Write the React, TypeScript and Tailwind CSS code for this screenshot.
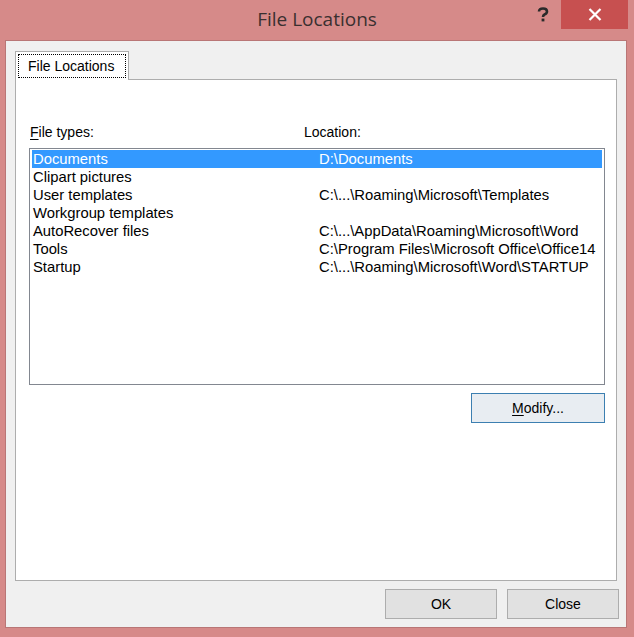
import React, { useState } from 'react';

type FileLocation = {
  type: string;
  location: string;
};

const locations: FileLocation[] = [
  { type: 'Documents', location: 'D:\\Documents' },
  { type: 'Clipart pictures', location: '' },
  { type: 'User templates', location: 'C:\\...\\Roaming\\Microsoft\\Templates' },
  { type: 'Workgroup templates', location: '' },
  { type: 'AutoRecover files', location: 'C:\\...\\AppData\\Roaming\\Microsoft\\Word' },
  { type: 'Tools', location: 'C:\\Program Files\\Microsoft Office\\Office14' },
  { type: 'Startup', location: 'C:\\...\\Roaming\\Microsoft\\Word\\STARTUP' },
];

const App = () => {
  const [selected, setSelected] = useState(0);

  return (
    <div className="w-[634px] h-[637px] bg-[#d68a89] flex flex-col font-['Liberation_Sans',Arial,sans-serif] text-[14px] text-black">
      {/* Title bar */}
      <div className="h-[40px] grid grid-cols-[1fr_auto_1fr] items-start">
        <div />
        <div className="pt-[6px] text-[19px] text-[#3a3030] font-['Open_Sans',sans-serif] leading-[26px]">
          File Locations
        </div>
        <div className="flex justify-end items-start">
          <button className="w-[36px] h-[29px] flex items-center justify-center text-[#2a2a2a]">
            <svg width="12" height="15" viewBox="0 0 12 15">
              <path d="M2 4.5 Q2 1.5 6 1.5 Q10 1.5 10 4.5 Q10 6.5 7.5 7.5 Q6 8.2 6 10" fill="none" stroke="currentColor" strokeWidth="2.6" />
              <rect x="4.6" y="11.6" width="2.8" height="2.8" fill="currentColor" />
            </svg>
          </button>
          <button className="w-[67px] h-[29px] mr-[6px] bg-[#c75050] flex items-center justify-center">
            <svg width="14" height="13" viewBox="0 0 14 13">
              <path d="M1.5 1 L12.5 12 M12.5 1 L1.5 12" stroke="#ffffff" strokeWidth="2.2" />
            </svg>
          </button>
        </div>
      </div>

      {/* Client area */}
      <div className="ml-[5px] w-[622px] h-[588px] bg-[#f0f0f0] border border-[#b97676] flex flex-col">
        <div className="ml-[9px] mt-[10px] w-[602px]">
          {/* Tab strip */}
          <div className="flex">
            <div className="w-[114px] h-[29px] bg-white border border-b-0 border-[#adadad] p-[2px] relative z-10 -mb-px">
              <div className="h-full border border-dotted border-black flex items-center pl-[9px] leading-none">
                File Locations
              </div>
            </div>
          </div>

          {/* Tab panel */}
          <div className="h-[502px] bg-white border border-[#adadad] pl-[13px] pr-[11px] pt-[42px]">
            <div className="flex h-[20px] items-center">
              <div className="w-[275px] pl-px">
                <span className="underline underline-offset-2">F</span>ile types:
              </div>
              <div>Location:</div>
            </div>
            <div className="mt-[6px] h-[237px] border border-[#828790] px-[2px] pt-px text-[14.8px]">
              {locations.map((item, index) => (
                <div
                  key={item.type}
                  onClick={() => setSelected(index)}
                  className={
                    index === selected
                      ? 'flex h-[18px] items-center bg-[#3399ff] text-white'
                      : 'flex h-[18px] items-center'
                  }
                >
                  <div className="w-[287px] pl-px whitespace-nowrap">{item.type}</div>
                  <div className="whitespace-nowrap">{item.location}</div>
                </div>
              ))}
            </div>
            <div className="flex justify-end mt-[8px]">
              <button className="w-[134px] h-[30px] bg-[#e8edf2] border border-[#3c7fb1] flex items-center justify-center">
                <span>
                  <span className="underline underline-offset-2">M</span>odify...
                </span>
              </button>
            </div>
          </div>
        </div>

        {/* Dialog buttons */}
        <div className="flex justify-end gap-[10px] mt-[8px] mr-[7px]">
          <button className="w-[112px] h-[30px] bg-[#e1e1e1] border border-[#adadad]">OK</button>
          <button className="w-[112px] h-[30px] bg-[#e1e1e1] border border-[#adadad]">Close</button>
        </div>
      </div>
    </div>
  );
};

export default App;
